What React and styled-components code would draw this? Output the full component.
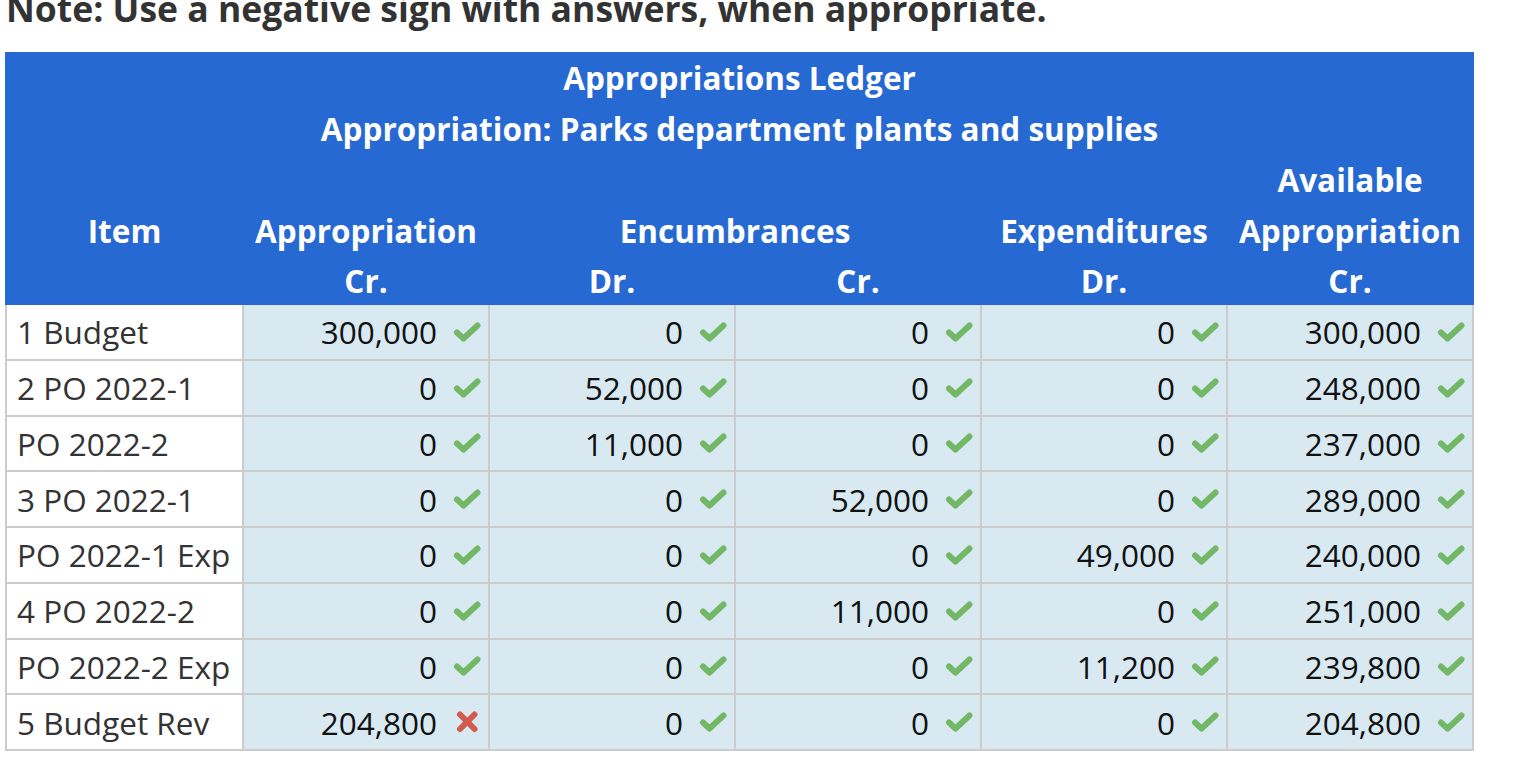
import React from "react";
import styled, { createGlobalStyle } from "styled-components";

const GlobalStyle = createGlobalStyle`
  html, body {
    margin: 0;
    padding: 0;
    background: #ffffff;
    font-family: "Open Sans", "Liberation Sans", sans-serif;
    overflow: hidden;
  }
`;

const COLS = "235px repeat(5, 244px)";

const Page = styled.div`
  padding-left: 5px;
  width: 1469px;
`;

const Note = styled.p`
  margin: -16px 0 0 1px;
  height: 68px;
  font-size: 35.5px;
  font-weight: 700;
  color: #333333;
  line-height: 48px;
  white-space: nowrap;
`;

const Header = styled.div`
  display: grid;
  grid-template-columns: ${COLS};
  grid-template-rows: 51px 51px 51px 51px 49px;
  column-gap: 2px;
  padding: 0 2px;
  background: #2769d2;
  color: #ffffff;
  font-size: 31.5px;
  font-weight: 700;
`;

const HeadCell = styled.div`
  display: flex;
  align-items: center;
  justify-content: center;
  white-space: nowrap;
  grid-column: ${(p) => p.$col || "auto"};
  grid-row: ${(p) => p.$row || "auto"};
`;

const Body = styled.div`
  display: grid;
  grid-template-columns: ${COLS};
  grid-auto-rows: 53.75px;
  gap: 2px;
  padding: 0 2px 2px;
  background: #cccccc;
  font-size: 31.5px;
`;

const ItemCell = styled.div`
  display: flex;
  align-items: center;
  padding-left: 10px;
  background: #ffffff;
  color: #333333;
  white-space: nowrap;
`;

const NumCell = styled.div`
  display: flex;
  align-items: center;
  justify-content: flex-end;
  gap: 16px;
  padding-right: 7px;
  background: #d8e9f1;
  color: #111111;
`;

const Mark = styled.svg`
  flex: none;
  width: 28px;
  height: 22px;
`;

const Check = () => (
  <Mark viewBox="0 0 28 22">
    <polyline
      points="4,11.5 10.5,17.5 24.5,4.5"
      fill="none"
      stroke="#72b866"
      strokeWidth="6"
      strokeLinecap="round"
      strokeLinejoin="round"
    />
  </Mark>
);

const Cross = () => (
  <Mark viewBox="0 0 28 22">
    <g stroke="#d25a4e" strokeWidth="6" strokeLinecap="round">
      <line x1="7" y1="3.5" x2="21.5" y2="18" />
      <line x1="21.5" y1="3.5" x2="7" y2="18" />
    </g>
  </Mark>
);

const rows = [
  ["1 Budget", "300,000", "0", "0", "0", "300,000"],
  ["2 PO 2022-1", "0", "52,000", "0", "0", "248,000"],
  ["PO 2022-2", "0", "11,000", "0", "0", "237,000"],
  ["3 PO 2022-1", "0", "0", "52,000", "0", "289,000"],
  ["PO 2022-1 Exp", "0", "0", "0", "49,000", "240,000"],
  ["4 PO 2022-2", "0", "0", "11,000", "0", "251,000"],
  ["PO 2022-2 Exp", "0", "0", "0", "11,200", "239,800"],
  ["5 Budget Rev", "204,800", "0", "0", "0", "204,800"],
];

// only one answer is marked wrong
const wrong = { "7-1": true };

export default function App() {
  return (
    <>
      <GlobalStyle />
      <Page>
        <Note>Note: Use a negative sign with answers, when appropriate.</Note>
        <Header>
          <HeadCell $col="1 / 7" $row="1">Appropriations Ledger</HeadCell>
          <HeadCell $col="1 / 7" $row="2">
            Appropriation: Parks department plants and supplies
          </HeadCell>
          <HeadCell $col="6" $row="3">Available</HeadCell>
          <HeadCell $col="1" $row="4">Item</HeadCell>
          <HeadCell $col="2" $row="4">Appropriation</HeadCell>
          <HeadCell $col="3 / 5" $row="4">Encumbrances</HeadCell>
          <HeadCell $col="5" $row="4">Expenditures</HeadCell>
          <HeadCell $col="6" $row="4">Appropriation</HeadCell>
          <HeadCell $col="2" $row="5">Cr.</HeadCell>
          <HeadCell $col="3" $row="5">Dr.</HeadCell>
          <HeadCell $col="4" $row="5">Cr.</HeadCell>
          <HeadCell $col="5" $row="5">Dr.</HeadCell>
          <HeadCell $col="6" $row="5">Cr.</HeadCell>
        </Header>
        <Body>
          {rows.map((r, i) => (
            <React.Fragment key={i}>
              <ItemCell>{r[0]}</ItemCell>
              {r.slice(1).map((v, j) => (
                <NumCell key={j}>
                  {v}
                  {wrong[`${i}-${j + 1}`] ? <Cross /> : <Check />}
                </NumCell>
              ))}
            </React.Fragment>
          ))}
        </Body>
      </Page>
    </>
  );
}
